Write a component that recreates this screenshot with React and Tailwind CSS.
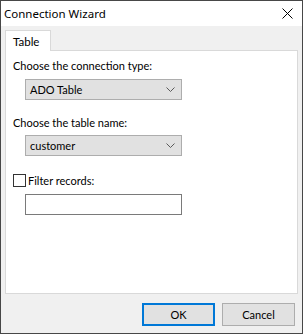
import React from "react";

const Chevron = () => (
  <svg width="9" height="5" viewBox="0 0 9 5" className="shrink-0">
    <path d="M0.5 0.5 L4.5 4.5 L8.5 0.5" fill="none" stroke="#5a5a5a" strokeWidth="1" />
  </svg>
);

const Dropdown = ({ value }) => (
  <div className="ml-[12px] flex h-[21px] w-[157px] items-center justify-between border border-[#adadad] bg-[#e1e1e1] pl-[4px] pr-[6px]">
    <span>{value}</span>
    <Chevron />
  </div>
);

export default function App() {
  return (
    <div
      className="flex h-[334px] w-[303px] flex-col border border-[#474747] bg-[#f0f0f0] text-[11px] leading-[15px] text-black"
      style={{ fontFamily: "Lato, 'Noto Sans', sans-serif" }}
    >
      {/* title bar */}
      <div className="flex h-[25px] shrink-0 items-center justify-between bg-white pl-[3px] pr-[9px]">
        <span className="text-[11.5px]" style={{ fontFamily: "'Noto Sans', sans-serif" }}>
          Connection Wizard
        </span>
        <svg width="11" height="11" viewBox="0 0 11 11">
          <path d="M0.5 0.5 L10.5 10.5 M10.5 0.5 L0.5 10.5" stroke="#000" strokeWidth="1" />
        </svg>
      </div>

      {/* tabs */}
      <div className="flex flex-1 flex-col px-[4px] pt-[4px]">
        <div className="flex">
          <div className="-mb-px z-10 flex h-[21px] w-[46px] items-center border border-b-0 border-[#d9d9d9] bg-white pl-[7px] text-[11.5px]">
            Table
          </div>
        </div>
        <div className="flex h-[244px] flex-col border border-[#d9d9d9] bg-white pl-[7px]">
          <div className="mt-[7px]">Choose the connection type:</div>
          <div className="mt-[6px]">
            <Dropdown value="ADO Table" />
          </div>
          <div className="mt-[15px]">Choose the table name:</div>
          <div className="mt-[5px]">
            <Dropdown value="customer" />
          </div>
          <label className="mt-[17px] flex items-center">
            <span className="h-[13px] w-[13px] border border-[#333]" />
            <span className="ml-[2px]">Filter records:</span>
          </label>
          <div className="ml-[12px] mt-[6px] h-[21px] w-[157px] border border-[#7a7a7a] bg-white" />
        </div>

        {/* buttons */}
        <div className="mt-[9px] flex justify-end gap-[7px] pr-[3px]">
          <button className="h-[23px] w-[73px] border-2 border-[#0078d7] bg-[#e1e1e1]">OK</button>
          <button className="h-[23px] w-[73px] border border-[#adadad] bg-[#e1e1e1]">Cancel</button>
        </div>
      </div>
    </div>
  );
}
